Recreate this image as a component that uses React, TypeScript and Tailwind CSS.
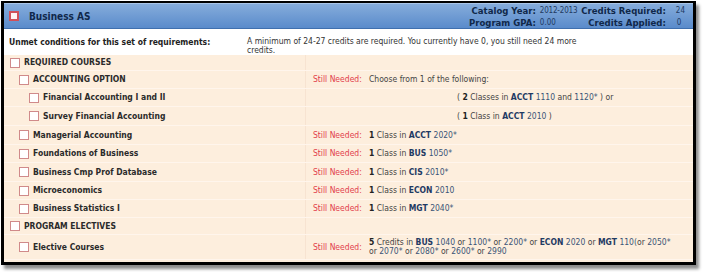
import React from "react";

const font = { fontFamily: '"DejaVu Sans Condensed", "DejaVu Sans", Tahoma, sans-serif' };

function Box({ big = false }: { big?: boolean }) {
  return (
    <span
      className={
        big
          ? "inline-block w-[10px] h-[10px] border-2 border-[#d0505a] bg-[#fff4f4] shrink-0"
          : "inline-block w-[10px] h-[10px] border-[1.5px] border-[#d08a8a] bg-white shrink-0"
      }
    />
  );
}

type Row = {
  level: number;
  label: string;
  needed?: boolean;
  right?: React.ReactNode;
  h: string;
};

const B = ({ children }: { children: React.ReactNode }) => (
  <span className="font-bold text-[#1f3a63]">{children}</span>
);
const N = ({ children }: { children: React.ReactNode }) => (
  <span className="text-[#3b5577]">{children}</span>
);
const K = ({ children }: { children: React.ReactNode }) => (
  <span className="font-bold text-[#222]">{children}</span>
);

const rows: Row[] = [
  { level: 0, label: "REQUIRED COURSES", h: "h-[16px]" },
  {
    level: 1,
    label: "ACCOUNTING OPTION",
    needed: true,
    right: <span>Choose from 1 of the following:</span>,
    h: "h-[18px]",
  },
  {
    level: 2,
    label: "Financial Accounting I and II",
    right: (
      <span className="pl-[88px]">
        ( <K>2</K> Classes in <B>ACCT</B> <N>1110</N> and <N>1120*</N> ) or
      </span>
    ),
    h: "h-[18px]",
  },
  {
    level: 2,
    label: "Survey Financial Accounting",
    right: (
      <span className="pl-[88px]">
        ( <K>1</K> Class in <B>ACCT</B> <N>2010</N> )
      </span>
    ),
    h: "h-[19px]",
  },
  {
    level: 1,
    label: "Managerial Accounting",
    needed: true,
    right: (
      <span>
        <K>1</K> Class in <B>ACCT</B> <N>2020*</N>
      </span>
    ),
    h: "h-[19px]",
  },
  {
    level: 1,
    label: "Foundations of Business",
    needed: true,
    right: (
      <span>
        <K>1</K> Class in <B>BUS</B> <N>1050*</N>
      </span>
    ),
    h: "h-[18px]",
  },
  {
    level: 1,
    label: "Business Cmp Prof Database",
    needed: true,
    right: (
      <span>
        <K>1</K> Class in <B>CIS</B> <N>2010*</N>
      </span>
    ),
    h: "h-[19px]",
  },
  {
    level: 1,
    label: "Microeconomics",
    needed: true,
    right: (
      <span>
        <K>1</K> Class in <B>ECON</B> <N>2010</N>
      </span>
    ),
    h: "h-[18px]",
  },
  {
    level: 1,
    label: "Business Statistics I",
    needed: true,
    right: (
      <span>
        <K>1</K> Class in <B>MGT</B> <N>2040*</N>
      </span>
    ),
    h: "h-[18px]",
  },
  { level: 0, label: "PROGRAM ELECTIVES", h: "h-[17px]" },
  {
    level: 1,
    label: "Elective Courses",
    needed: true,
    right: (
      <span className="leading-[9px] block whitespace-nowrap">
        <K>5</K> Credits in <B>BUS</B> <N>1040</N> or <N>1100*</N> or <N>2200*</N> or{" "}
        <B>ECON</B> <N>2020</N> or <B>MGT</B> <N>110(</N>or <N>2050*</N>
        <br />
        or <N>2070*</N> or <N>2080*</N> or <N>2600*</N> or <N>2990</N>
      </span>
    ),
    h: "h-[25px]",
  },
];

export default function App() {
  return (
    <div className="w-[710px] h-[272px] bg-white relative overflow-hidden" style={font}>
      <div className="ml-[1px] mt-[1px] w-[695px] h-[264px] border-[3px] border-black border-t-[2px] bg-[#fdeedd] shadow-[3px_4px_3px_rgba(0,0,0,0.45)] flex flex-col overflow-hidden text-[8.5px] text-[#333]">
        {/* Header */}
        <div className="h-[26px] shrink-0 bg-gradient-to-b from-[#85acdb] to-[#5a8bcb] border-t border-[#a9c5e8] border-b border-b-[#3f6fae] flex items-center pl-[5px] pr-[8px]">
          <Box big />
          <span className="ml-[10px] font-bold text-[10px] text-[#10284a]">Business AS</span>
          <div className="ml-auto grid grid-cols-[auto_auto_auto_auto] gap-x-[4px] leading-[12px] mt-[1px] whitespace-nowrap">
            <span className="font-bold text-[9.5px] text-[#10284a] text-right">Catalog Year:</span>
            <span className="text-[#1f3a63] text-[8px] tracking-[-0.2px]">2012-2013</span>
            <span className="font-bold text-[9.5px] text-[#10284a] text-right">Credits Required:</span>
            <span className="text-[#1f3a63] text-[8px] pl-[6px]">24</span>
            <span className="font-bold text-[9.5px] text-[#10284a] text-right">Program GPA:</span>
            <span className="text-[#1f3a63] text-[8px]">0.00</span>
            <span className="font-bold text-[9.5px] text-[#10284a] text-right">Credits Applied:</span>
            <span className="text-[#1f3a63] text-[8px] pl-[7px]">0</span>
          </div>
        </div>
        {/* Unmet */}
        <div className="h-[26px] shrink-0 bg-white border-t border-white flex">
          <div className="w-[243px] pl-[5px] pt-[6px] font-bold text-[#222]">
            Unmet conditions for this set of requirements:
          </div>
          <div className="flex-1 pt-[7px] leading-[9px] text-[#333]">
            <span className="whitespace-nowrap">
              A minimum of 24-27 credits are required. You currently have 0, you still need 24 more
            </span>
            <br />
            credits.
          </div>
        </div>
        {/* Rows */}
        <div className="flex-1 flex flex-col">
          {rows.map((r, i) => (
            <div key={i} className={`${r.h} shrink-0 flex border-b border-[#fff5ec]`}>
              <div
                className={`w-[302px] shrink-0 flex items-center border-r border-[#f7e3d1] ${
                  r.level === 0 ? "pl-[6px]" : r.level === 1 ? "pl-[15px]" : "pl-[25px]"
                }`}
              >
                <Box />
                <span className="ml-[4px] font-bold text-[#2a2a2a]">{r.label}</span>
              </div>
              <div className="flex-1 flex items-center pl-[7px]">
                {r.needed ? (
                  <span className="text-[#e2404c] w-[56px] shrink-0">Still Needed:</span>
                ) : (
                  <span className="w-[56px] shrink-0" />
                )}
                <span className="text-[#444]">{r.right}</span>
              </div>
            </div>
          ))}
        </div>
      </div>
    </div>
  );
}
